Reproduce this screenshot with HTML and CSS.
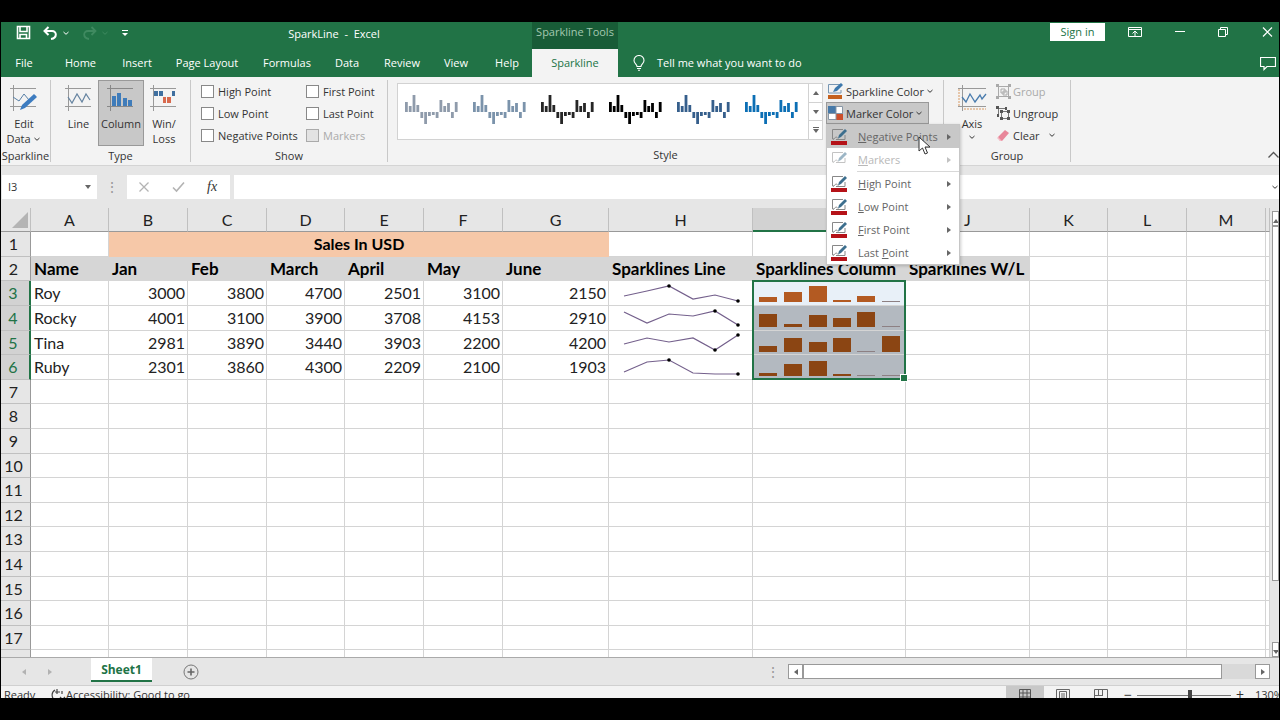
FILE: index.html
```html
<!DOCTYPE html>
<html lang="en">
<head>
  <meta charset="UTF-8">
  <meta name="viewport" content="width=device-width, initial-scale=1.0">
  <title>SparkLine - Excel</title>
  <link rel="stylesheet" href="styles.css">
</head>
<body>
  <svg class="defs" aria-hidden="true">
    <symbol id="caret" viewBox="0 0 8 8"><path d="M1.5 3L4 5.3 6.5 3" fill="none" stroke="currentColor" stroke-width="1"/></symbol>
    <symbol id="bars" viewBox="0 0 54 32">
      <path fill="currentColor" d="M0 8h2.8v10H0zM3.8 12h2.8v6H3.8zM7.6 1h2.8v17H7.6zM11.4 11h2.8v7h-2.8zM15.4 18h2.8v6h-2.8zM19.2 18H22v12h-2.8zM23 18h2.8v4H23zM26.9 18h2.8v3h-2.8zM30.7 18h2.8v6h-2.8zM34.5 6h2.8v12h-2.8zM38.3 12h2.8v6h-2.8zM42.1 9h2.8v9h-2.8zM46 18h2.8v6H46zM49.8 8h2.8v10h-2.8z"/>
    </symbol>
    <symbol id="pen" viewBox="0 0 16 17">
      <path d="M12 1.5H1.5V11H3M5 11.5h9V7" fill="none" stroke="#888"/>
      <path d="M7 10.5l1-3.5 6-6 2 2-6 6z" fill="#3d6f8e"/>
      <path d="M2.5 11.5C5 8 6 9 7 10.5" fill="none" stroke="#888"/>
    </symbol>
  </svg>

  <div class="window">
    <header class="title-bar">
      <div class="quick-access">
        <button aria-label="Save"><svg width="15" height="15" viewBox="0 0 15 15"><path d="M1.5 1.5h12v12h-12zM4 1.5v5h7v-5M4 13.5v-4h6.5v4" fill="none" stroke="#fff" stroke-width="1.6"/></svg></button>
        <button class="undo" aria-label="Undo"><svg width="15" height="14" viewBox="0 0 15 14"><path d="M5.5 1L1.5 5l4 4M2 5h7c5 0 5.500 7-1 8" fill="none" stroke="#fff" stroke-width="2"/></svg><svg width="8" height="8"><use href="#caret"/></svg></button>
        <button class="redo" aria-label="Redo" disabled><svg width="15" height="14" viewBox="0 0 15 14"><path d="M9.5 1l4 4-4 4M13 5H6c-5 0-5.500 7 1 8" fill="none" stroke="currentColor" stroke-width="1.8"/></svg><svg width="8" height="8"><use href="#caret"/></svg></button>
        <button aria-label="Customize toolbar"><svg width="8" height="8" viewBox="0 0 8 8"><path d="M1 1.5h6" stroke="#fff"/><path d="M1 4h6L4 7z" fill="#fff"/></svg></button>
      </div>
      <div class="doc-title">SparkLine &nbsp;-&nbsp; Excel</div>
      <div class="context-title">Sparkline Tools</div>
      <div class="window-controls">
        <button class="sign-in">Sign in</button>
        <button aria-label="Ribbon options"><svg width="14" height="12" viewBox="0 0 14 12"><path d="M.5 1.5h13v9H.5zM.5 3.5h13M7 10V5M4.5 7.5L7 5l2.5 2.5" fill="none" stroke="#fff"/></svg></button>
        <button aria-label="Minimize"><svg width="10" height="12" viewBox="0 0 10 12"><path d="M0 5.5h10" stroke="#fff"/></svg></button>
        <button aria-label="Restore"><svg width="11" height="12" viewBox="0 0 11 12"><path d="M.5 3.5h7v7h-7zM2.5 3V1.5h7v7H8" fill="none" stroke="#fff"/></svg></button>
        <button aria-label="Close"><svg width="11" height="12" viewBox="0 0 11 12"><path d="M1 1.5l9 9M10 1.5l-9 9" stroke="#fff" stroke-width="1.2"/></svg></button>
      </div>
    </header>

    <nav class="tabs">
      <a href="#">File</a>
      <a href="#">Home</a>
      <a href="#">Insert</a>
      <a href="#">Page Layout</a>
      <a href="#">Formulas</a>
      <a href="#">Data</a>
      <a href="#">Review</a>
      <a href="#">View</a>
      <a href="#">Help</a>
      <a href="#" class="active">Sparkline</a>
      <button class="tell-me"><svg width="12" height="16" viewBox="0 0 12 16"><path d="M4 11.5c0-2.5-3-3-3-6a5 5 0 0 1 10 0c0 3-3 3.5-3 6zM4 13.5h4M5 15.3h2" fill="none" stroke="#fff" stroke-width="1.1"/></svg>Tell me what you want to do</button>
      <button class="comments" aria-label="Comments"><svg width="16" height="15" viewBox="0 0 16 15"><path d="M.5 1.5h15v9H7l-3 3v-3H.5z" fill="none" stroke="#fff" stroke-width="1.2"/></svg></button>
    </nav>

    <div class="ribbon">
      <section class="group group-sparkline">
        <div class="group-body">
          <button class="big"><svg width="30" height="26" viewBox="0 0 30 26"><path d="M4.5 0v26M1 3.5h26M1 21.5h26" stroke="#999" fill="none"/><path d="M4 12l6 4 5-7 5 6 7-4" fill="none" stroke="#5980a6"/><path d="M11 25l2-5L25 9l3 3-12 11z" fill="#3d7cc0"/></svg><span>Edit</span><span>Data <svg width="8" height="8"><use href="#caret"/></svg></span></button>
        </div>
        <h2>Sparkline</h2>
      </section>

      <section class="group group-type">
        <div class="group-body">
          <button class="big"><svg width="30" height="26" viewBox="0 0 30 26"><path d="M4.5 0v26M1 3.5h26M1 21.5h26" stroke="#999" fill="none"/><path d="M4 12l4 6 5-9 5 8 4-8 4 6" fill="none" stroke="#6583a0" stroke-width="1.2"/></svg><span>Line</span></button>
          <button class="big pressed"><svg width="30" height="26" viewBox="0 0 30 26"><path d="M4.5 0v26M1 3.5h26M1 21.5h26" stroke="#888" fill="none"/><path d="M6 11h4v10H6zM11 8h4v13h-4zM17 13h4v8h-4zM22 15h4v6h-4z" fill="#3f7cba"/></svg><span>Column</span></button>
          <button class="big"><svg width="30" height="26" viewBox="0 0 30 26"><path d="M4.5 0v26M1 3.5h26M1 21.5h26" stroke="#999" fill="none"/><path d="M5 6h4v5H5zM10 6h4v5h-4zM23 6h3v5h-3z" fill="#3f6f9f"/><path d="M14 12h3v6h-3zM18 12h4v6h-4z" fill="#d8694d"/></svg><span>Win/</span><span>Loss</span></button>
        </div>
        <h2>Type</h2>
      </section>

      <section class="group group-show">
        <div class="group-body checks">
          <label><input type="checkbox">High Point</label>
          <label><input type="checkbox">First Point</label>
          <label><input type="checkbox">Low Point</label>
          <label><input type="checkbox">Last Point</label>
          <label><input type="checkbox">Negative Points</label>
          <label class="off"><input type="checkbox" disabled>Markers</label>
        </div>
        <h2>Show</h2>
      </section>

      <section class="group group-style">
        <div class="group-body">
          <div class="gallery">
            <button class="thumb slate" aria-label="Style 1"><svg><use href="#bars"/></svg></button>
            <button class="thumb steel" aria-label="Style 2"><svg><use href="#bars"/></svg></button>
            <button class="thumb dark" aria-label="Style 3"><svg><use href="#bars"/></svg></button>
            <button class="thumb black" aria-label="Style 4"><svg><use href="#bars"/></svg></button>
            <button class="thumb navy" aria-label="Style 5"><svg><use href="#bars"/></svg></button>
            <button class="thumb blue" aria-label="Style 6"><svg><use href="#bars"/></svg></button>
            <div class="gallery-scroll">
              <button aria-label="Up"><i class="tri up"></i></button>
              <button aria-label="Down"><i class="tri down"></i></button>
              <button class="more" aria-label="More"><i class="tri down"></i></button>
            </div>
          </div>
          <div class="color-buttons">
            <button class="small"><svg width="17" height="16" viewBox="0 0 17 16"><path d="M14 1.5H1.5V10H14V7" fill="none" stroke="#7796b3"/><path d="M6 9l2-4 6-5 2 2-6 6z" fill="#3d78ac"/><path d="M1 12h14v4H1z" fill="#c5611f"/></svg>Sparkline Color <svg width="8" height="8"><use href="#caret"/></svg></button>
            <button class="small open" aria-haspopup="menu"><svg width="17" height="16" viewBox="0 0 17 16"><path d="M1.5 1.5h14v13h-14z" fill="#fff" stroke="#8796a5"/><path d="M1 1h8v7H1z" fill="#4679a8"/><path d="M9 9h7v6H9z" fill="#cc4f2b"/><path d="M9 1v14M1 8.5h15" stroke="#8796a5"/></svg>Marker Color <svg width="8" height="8"><use href="#caret"/></svg></button>
            <div class="menu" role="menu">
              <button class="menu-item hover" role="menuitem"><svg class="pen"><use href="#pen"/></svg><span><u>N</u>egative Points</span><i class="tri right"></i></button>
              <button class="menu-item off" role="menuitem" disabled><svg class="pen"><use href="#pen"/></svg><span><u>M</u>arkers</span><i class="tri right"></i></button>
              <hr>
              <button class="menu-item" role="menuitem"><svg class="pen"><use href="#pen"/></svg><span><u>H</u>igh Point</span><i class="tri right"></i></button>
              <button class="menu-item" role="menuitem"><svg class="pen"><use href="#pen"/></svg><span><u>L</u>ow Point</span><i class="tri right"></i></button>
              <button class="menu-item" role="menuitem"><svg class="pen"><use href="#pen"/></svg><span><u>F</u>irst Point</span><i class="tri right"></i></button>
              <button class="menu-item" role="menuitem"><svg class="pen"><use href="#pen"/></svg><span>Last <u>P</u>oint</span><i class="tri right"></i></button>
              <svg class="cursor" width="13" height="20" viewBox="0 0 13 20"><path d="M1 1v14l3.5-3 2.5 6 2.5-1-2.5-6H12z" fill="#fff" stroke="#333"/></svg>
            </div>
          </div>
        </div>
        <h2>Style</h2>
      </section>

      <section class="group group-group">
        <div class="group-body">
          <button class="big"><svg width="30" height="26" viewBox="0 0 30 26"><path d="M5.5 0v26M1 3.5h28M1 21.5h28" stroke="#999" fill="none"/><path d="M1 5h3M1 8h3M1 11h3M1 14h3M1 17h3M1 20h3M7 24h22" stroke="#d99a62" stroke-dasharray="2 1"/><path d="M5 12l4 5 4-8 5 8 5-7 2 4 4-5" fill="none" stroke="#4a7cae" stroke-width="1.3"/></svg><span>Axis</span><svg width="8" height="12"><use href="#caret"/></svg></button>
          <div class="stack">
            <button class="small off"><svg width="15" height="15" viewBox="0 0 15 15"><path d="M2.5 2.5h10v10h-10zM5 5h4v4H5zM7 7h4v4H7z" fill="none" stroke="currentColor"/><path d="M0 0h3v3H0zM12 0h3v3h-3zM0 12h3v3H0zM12 12h3v3h-3z" fill="currentColor"/></svg>Group</button>
            <button class="small"><svg width="15" height="15" viewBox="0 0 15 15"><path d="M1 2.5h10M2.5 1v9M5.5 5.5h7v7h-7z" fill="none" stroke="#777"/><path d="M0 0h3v3H0zM9 1h2v3H9zM1 8h2v3H1zM4 4h3v3H4zM11 4h3v3h-3zM4 11h3v3H4zM11 11h3v3h-3z" fill="#555"/></svg>Ungroup</button>
            <button class="small clear"><svg width="15" height="15" viewBox="0 0 15 15"><path d="M2 9l7-7 4 3-7 8H4z" fill="#e8879a"/><path d="M2 9l4 4H4l-3-3z" fill="#f6bcc6"/></svg>Clear <svg width="8" height="8"><use href="#caret"/></svg></button>
          </div>
        </div>
        <h2>Group</h2>
      </section>
      <button class="collapse" aria-label="Collapse ribbon"><svg width="11" height="8" viewBox="0 0 11 8"><path d="M.5 6.5l5-5 5 5" fill="none" stroke="#555" stroke-width="1.3"/></svg></button>
    </div>

    <div class="formula-bar">
      <div class="name-box"><input type="text" value="I3" aria-label="Name box"><i class="tri down"></i></div>
      <span class="dots">⋮</span>
      <div class="formula-tools">
        <svg width="12" height="12" viewBox="0 0 12 12"><path d="M1.5 1.5l9 9M10.5 1.5l-9 9" stroke="#b3b3b3" stroke-width="1.3"/></svg>
        <svg width="13" height="12" viewBox="0 0 13 12"><path d="M1 6.5L4.500 10 12 1.5" fill="none" stroke="#b3b3b3" stroke-width="1.6"/></svg>
        <em>fx</em>
      </div>
      <input class="formula" type="text" aria-label="Formula">
      <svg class="expand" width="8" height="8"><use href="#caret" y="8" height="8"/></svg>
    </div>

    <main class="sheet">
      <table>
        <colgroup>
          <col class="w-row"><col class="w-78"><col class="w-79"><col class="w-79"><col class="w-78"><col class="w-79"><col class="w-79"><col class="w-g"><col class="w-h"><col class="w-i"><col class="w-j"><col class="w-78"><col class="w-79"><col class="w-79"><col>
        </colgroup>
        <thead>
          <tr><th class="corner"><svg width="16" height="16" viewBox="0 0 16 16"><path d="M16 0v16H0z" fill="#b4b4b4"/></svg></th><th>A</th><th>B</th><th>C</th><th>D</th><th>E</th><th>F</th><th>G</th><th>H</th><th class="selected">I</th><th>J</th><th>K</th><th>L</th><th>M</th><th></th></tr>
        </thead>
        <tbody id="rows"></tbody>
      </table>
      <div class="v-scroll">
        <button aria-label="Scroll up"><i class="tri up"></i></button>
        <div class="v-thumb"></div>
        <button aria-label="Scroll down"><i class="tri down"></i></button>
      </div>
    </main>

    <div class="sheet-tabs">
      <div class="sheet-nav"><i class="tri left"></i><i class="tri right"></i></div>
      <a href="#" class="sheet-tab">Sheet1</a>
      <button class="add-sheet" aria-label="New sheet"><svg width="16" height="16" viewBox="0 0 16 16"><circle cx="8" cy="8" r="7" fill="none" stroke="#777"/><path d="M8 4.5v7M4.5 8h7" stroke="#666" stroke-width="1.6"/></svg></button>
      <span class="dots">⋮</span>
      <div class="h-scroll">
        <button aria-label="Scroll left"><i class="tri left"></i></button>
        <div class="h-thumb"></div>
        <button class="last" aria-label="Scroll right"><i class="tri right"></i></button>
      </div>
    </div>

    <footer class="status-bar">
      <span class="ready">Ready</span>
      <svg width="16" height="16" viewBox="0 0 16 16"><path d="M5 2a6 6 0 0 0 2 11M7 1v5M5 4h5M12 3v3M10 9l5 5M15 9l-5 5" fill="none" stroke="#444" stroke-width="1.2"/></svg>
      <span>Accessibility: Good to go</span>
      <div class="views">
        <button class="on" aria-label="Normal"><svg width="14" height="14" viewBox="0 0 14 14"><path d="M1.5 1.5h11v11h-11zM5 1v12M9 1v12M1 5h12M1 9h12" fill="none" stroke="#555"/></svg></button>
        <button aria-label="Page layout"><svg width="14" height="14" viewBox="0 0 14 14"><path d="M.5 1.5h13v12H.5zM3.5 3.5h7v10h-7zM5 6h4M5 8h4M5 10h4" fill="none" stroke="#666"/></svg></button>
        <button aria-label="Page break"><svg width="14" height="14" viewBox="0 0 14 14"><path d="M.5 13V1.5h13V13M4.5 1v6M8.5 1v6M1 7.5h8" fill="none" stroke="#666"/></svg></button>
      </div>
      <div class="zoom"><span>−</span><input type="range" min="0" max="100" value="57" aria-label="Zoom"><span>+</span></div>
      <span class="percent">130%</span>
    </footer>
  </div>

  <script>
    const people = [
      { name: "Roy", sales: [3000, 3800, 4700, 2501, 3100, 2150], line: [15, 10, 5, 18, 14, 20], dots: [2, 5], bars: [5, 10, 16, 2, 6, 0] },
      { name: "Rocky", sales: [4001, 3100, 3900, 3708, 4153, 2910], line: [6, 17, 8, 10, 5, 19], dots: [4, 5], bars: [13, 3, 12, 9, 15, 0] },
      { name: "Tina", sales: [2981, 3890, 3440, 3903, 2200, 4200], line: [13, 7, 11, 7, 19, 4], dots: [4, 5], bars: [6, 14, 10, 14, 0, 16] },
      { name: "Ruby", sales: [2301, 3860, 4300, 2209, 2100, 1903], line: [17, 7, 5, 18, 19, 19], dots: [2, 5], bars: [3, 12, 15, 2, 0, 0] }
    ];
    const lineX = [15, 38, 60, 84, 106, 129];
    const barX = [6, 31, 56, 80, 104, 129];

    function lineChart(p) {
      const points = p.line.map((y, i) => `${lineX[i]},${y}`).join(" ");
      const dots = p.dots.map(i => `<circle cx="${lineX[i]}" cy="${p.line[i]}" r="1.8"/>`).join("");
      return `<svg class="spark" width="143" height="22"><polyline points="${points}" fill="none" stroke="#74608c" stroke-width="1.2"/>${dots}</svg>`;
    }

    function barChart(p) {
      const bars = p.bars.map((h, i) => h
        ? `<rect x="${barX[i]}" y="${21 - h}" width="18" height="${h}"/>`
        : `<rect class="low" x="${barX[i]}" y="20" width="18" height="1"/>`).join("");
      return `<svg class="spark columns" width="152" height="22">${bars}</svg>`;
    }

    const blank = n => "<td></td>".repeat(n);
    let html = `<tr><th>1</th><td></td><td class="banner" colspan="6">Sales In USD</td>${blank(7)}</tr>`;

    const titles = ["Name", "Jan", "Feb", "March", "April", "May", "June", "Sparklines Line", "Sparklines Column", "Sparklines W/L"];
    html += `<tr class="titles"><th>2</th>${titles.map(t => `<td>${t}</td>`).join("")}${blank(4).replaceAll("<td>", '<td class="plain">')}</tr>`;

    people.forEach((p, i) => {
      const frame = i === 0 ? '<div class="selection"></div>' : "";
      html += `<tr><th class="selected">${i + 3}</th><td>${p.name}</td>`;
      html += p.sales.map(s => `<td class="num">${s}</td>`).join("");
      html += `<td>${lineChart(p)}</td><td class="picked${i === 0 ? " active-cell" : ""}">${barChart(p)}${frame}</td>${blank(5)}</tr>`;
    });

    for (let r = 7; r <= 18; r++) {
      html += `<tr><th>${r}</th>${blank(14)}</tr>`;
    }
    document.getElementById("rows").innerHTML = html;
  </script>
</body>
</html>
```
FILE: styles.css
```css
* {
  box-sizing: border-box;
}
body {
  margin: 0;
  background: #000;
  font-family: "Open Sans", "Noto Sans", sans-serif;
  font-size: 11px;
  color: #333;
}
button, input {
  font: inherit;
  color: inherit;
  border: none;
  background: none;
  padding: 0;
  margin: 0;
}
a {
  color: inherit;
  text-decoration: none;
}
.defs {
  position: absolute;
  width: 0;
  height: 0;
}
.window {
  display: flex;
  flex-direction: column;
  height: calc(100vh - 44px);
  margin: 22px 1px;
  background: #e6e6e6;
  overflow: hidden;
}

/* little arrows */
.tri {
  display: inline-block;
  flex: none;
  border: 3px solid transparent;
  width: 0;
  height: 0;
}
.tri.up { border-bottom: 4px solid #666; border-top: 0; }
.tri.down { border-top: 4px solid #666; border-bottom: 0; }
.tri.left { border-right: 4px solid #666; border-left: 0; }
.tri.right { border-left: 4px solid #666; border-right: 0; }

/* title bar */
.title-bar {
  display: flex;
  flex: none;
  height: 27px;
  background: #217346;
  color: #fff;
}
.quick-access {
  display: flex;
  align-items: center;
  gap: 12px;
  width: 210px;
  padding: 0 0 6px 15px;
}
.quick-access button {
  display: flex;
  align-items: center;
  gap: 4px;
}
.quick-access .redo {
  color: #3f8a60;
}
.doc-title {
  width: 246px;
  padding-top: 4px;
  text-align: center;
}
.context-title {
  width: 86px;
  margin-left: 75px;
  padding-top: 2px;
  background: #185c37;
  color: #a3c9b0;
  text-align: center;
}
.window-controls {
  display: flex;
  align-items: center;
  gap: 33px;
  margin-left: auto;
  padding: 0 6px 8px 0;
}
.window-controls button {
  display: flex;
}
.window-controls .sign-in {
  display: block;
  width: 55px;
  height: 18px;
  margin-right: -10px;
  background: #fff;
  color: #217346;
}

/* ribbon tabs */
.tabs {
  display: grid;
  grid-template-columns: 46px 67px 46px 94px 66px 54px 56px 52px 50px 86px auto 1fr;
  flex: none;
  height: 28px;
  background: #217346;
  color: #fff;
  line-height: 28px;
  text-align: center;
}
.tabs .active {
  background: #f3f3f3;
  color: #217346;
}
.tell-me {
  display: flex;
  align-items: center;
  gap: 12px;
  padding-left: 15px;
}
.comments {
  display: flex;
  align-items: center;
  justify-self: end;
  padding-right: 3px;
}

/* ribbon */
.ribbon {
  display: flex;
  flex: none;
  position: relative;
  z-index: 2;
  height: 88px;
  padding: 3px 0;
  background: #f3f3f3;
  line-height: 15px;
}
.group {
  display: flex;
  flex-direction: column;
  border-right: 1px solid #c8c8c8;
}
.group h2 {
  margin: 0;
  font-size: 11px;
  font-weight: normal;
  line-height: 15px;
  text-align: center;
}
.group-body {
  display: flex;
  height: 69px;
  margin-bottom: 1px;
}
.group h2 {
  padding-top: 1px;
}
.group-sparkline { width: 50px; }
.group-type { width: 140px; }
.group-show { width: 197px; }
.group-style { width: 556px; }
.group-group { width: 127px; }
.big {
  display: flex;
  flex: none;
  flex-direction: column;
  align-items: center;
  width: 46px;
  height: 66px;
  padding-top: 5px;
  white-space: nowrap;
  line-height: 15px;
}
.big > svg:first-child {
  flex: none;
  margin-bottom: 5px;
}
.big.pressed {
  background: #c8c8c8;
  border: 1px solid #999;
  padding-top: 4px;
}
.group-type .big:first-child {
  width: 47px;
  padding-left: 8px;
}
.group-type .big:last-child {
  width: 40px;
}
.checks {
  display: grid;
  grid-template-columns: 105px 80px;
  align-content: start;
  padding-left: 10px;
}
.checks label {
  display: flex;
  align-items: center;
  gap: 4px;
  height: 22px;
  white-space: nowrap;
}
.checks input {
  appearance: none;
  flex: none;
  width: 13px;
  height: 13px;
  border: 1px solid #888;
  background: #fff;
}
.checks .off {
  color: #aaa;
}
.checks .off input {
  background: #e3e3e3;
  border-color: #aaa;
}
.gallery {
  display: flex;
  width: 426px;
  height: 57px;
  margin: 3px 3px 0 9px;
  background: #fff;
  border: 1px solid #d2d2d2;
}
.thumb {
  width: 68px;
  padding: 0 7px 4px;
}
.thumb svg {
  display: block;
  width: 54px;
  height: 32px;
}
.slate { color: #8f9bab; }
.steel { color: #7b93ab; }
.dark { color: #262626; }
.black { color: #000; }
.navy { color: #365f8c; }
.blue { color: #0c6fb5; }
.gallery-scroll {
  display: flex;
  flex-direction: column;
  width: 14px;
  margin-left: auto;
  border-left: 1px solid #d2d2d2;
}
.gallery-scroll button {
  display: flex;
  flex: 1;
  flex-direction: column;
  gap: 1px;
  align-items: center;
  justify-content: center;
}
.gallery-scroll button + button {
  border-top: 1px solid #d2d2d2;
}
.gallery-scroll .more::before {
  content: "";
  width: 6px;
  border-top: 1px solid #666;
}
.small {
  display: flex;
  align-items: center;
  gap: 2px;
  height: 22px;
  padding: 0 1px;
  white-space: nowrap;
}
.small.off {
  color: #aaa;
}
.color-buttons {
  position: relative;
}
.small.open {
  width: 103px;
  background: #c8c8c8;
  border: 1px solid #999;
  padding: 0;
}
.stack {
  padding-left: 3px;
}
.group-group .big {
  width: 48px;
  padding-left: 8px;
}
.clear svg:last-child {
  margin-left: 6px;
}
.collapse {
  margin-left: auto;
  align-self: flex-end;
}

/* marker color menu */
.menu {
  position: absolute;
  top: 44px;
  left: 0;
  width: 134px;
  background: #fff;
  border: 1px solid #c6c6c6;
  box-shadow: 1px 1px 3px rgba(0, 0, 0, 0.2);
}
.menu-item {
  display: flex;
  align-items: center;
  width: 100%;
  height: 23px;
  padding: 0 8px 0 4px;
  color: #666;
}
.menu-item .pen {
  width: 16px;
  height: 17px;
  margin-right: 11px;
  background: linear-gradient(#b51218, #b51218) bottom / 100% 4px no-repeat;
}
.menu-item .tri {
  margin-left: auto;
}
.menu-item.hover {
  background: #c8c8c8;
}
.menu-item.off {
  color: #b8b8b8;
}
.menu-item.off .pen {
  background: none;
  opacity: 0.5;
}
.menu-item.off .tri {
  opacity: 0.4;
}
.menu hr {
  margin: 0 0 0 30px;
  border: none;
  border-top: 1px solid #d8d8d8;
}
.cursor {
  position: absolute;
  left: 91px;
  top: 11px;
}

/* formula bar */
.formula-bar {
  display: flex;
  flex: none;
  align-items: center;
  height: 43px;
  padding: 0 0 1px 1px;
  border-top: 1px solid #d4d4d4;
}
.name-box {
  display: flex;
  align-items: center;
  width: 95px;
  height: 24px;
  padding: 0 6px;
  background: #fff;
}
.name-box input {
  width: 77px;
}
.dots {
  width: 30px;
  color: #999;
  font-size: 14px;
  text-align: center;
}
.formula-tools {
  display: flex;
  align-items: center;
  gap: 22px;
  width: 103px;
  height: 24px;
  padding-left: 11px;
  background: #fff;
}
.formula-tools em {
  font-family: "Liberation Serif", serif;
  font-size: 14px;
}
.formula {
  flex: 1;
  height: 24px;
  margin-left: 4px;
  background: #fff;
}
.expand {
  background: #fff;
  height: 24px;
}

/* grid */
.sheet {
  display: flex;
  flex: 1;
  min-height: 0;
  overflow: hidden;
  border-bottom: 1px solid #aaa;
}
table {
  flex: 1;
  align-self: flex-start;
  width: 100%;
  table-layout: fixed;
  border-collapse: separate;
  border-spacing: 0;
  background: #fff;
  font-family: Lato, "Open Sans", sans-serif;
  font-size: 16px;
  line-height: 20px;
  color: #222;
}
.w-row { width: 30px; }
.w-78 { width: 78px; }
.w-79 { width: 79px; }
.w-g { width: 106px; }
.w-h { width: 144px; }
.w-i { width: 153px; }
.w-j { width: 124px; }
th, td {
  height: 25px;
  padding: 0 2px 0 3px;
  border-right: 1px solid #d4d4d4;
  border-bottom: 1px solid #d4d4d4;
  text-align: left;
  white-space: nowrap;
}
thead th {
  height: 24px;
}
tbody tr:nth-child(5n) > *,
tbody tr:nth-child(5n + 2) > * {
  height: 24px;
}
th {
  padding: 0;
  background: #e6e6e6;
  border-color: #c0c0c0;
  font-weight: normal;
  text-align: center;
}
thead th {
  border-bottom-color: #999;
}
tbody th {
  padding-right: 4px;
  border-right-color: #999;
}
th.selected {
  background: #d2d2d2;
  color: #217346;
}
thead th.selected {
  border-bottom: 2px solid #217346;
}
tbody th.selected {
  border-right: 2px solid #217346;
}
th.corner {
  padding-right: 2px;
  text-align: right;
  vertical-align: bottom;
}
.corner svg {
  display: block;
  margin: 0 0 3px auto;
}
.num {
  text-align: right;
}
.banner {
  background: #f6c8a8;
  border-color: #f6c8a8;
  color: #000;
  font-weight: bold;
  text-align: center;
}
.titles td:not(.plain) {
  background: #d6d6d6;
  border-color: #d6d6d6;
  color: #000;
  font-size: 17px;
  font-weight: bold;
}
td:has(.spark) {
  padding: 0;
  vertical-align: top;
}
.spark {
  display: block;
}
.columns {
  fill: #8b4513;
}
.active-cell .columns {
  fill: #b35a22;
}
.columns .low {
  fill: #8d8083;
}
.picked {
  position: relative;
  background: #b3b9c0;
}
.active-cell {
  background: #e8f0f8;
}
.selection {
  position: absolute;
  z-index: 1;
  top: -1px;
  left: -1px;
  width: calc(100% + 2px);
  height: 100px;
  border: 2px solid #217346;
}
.selection::after {
  content: "";
  position: absolute;
  right: -4px;
  bottom: -4px;
  width: 6px;
  height: 6px;
  background: #217346;
  border: 1px solid #fff;
}
.v-scroll {
  display: flex;
  flex-direction: column;
  flex: none;
  width: 9px;
  padding-top: 3px;
  padding-left: 2px;
}
.v-scroll button {
  height: 15px;
  overflow: hidden;
  background: #fff;
  border: 1px solid #999;
  line-height: 8px;
}
.v-thumb {
  height: 355px;
  margin-bottom: auto;
  background: #fff;
  border: 1px solid #999;
}

/* sheet tabs */
.sheet-tabs {
  display: flex;
  flex: none;
  align-items: center;
  height: 27px;
}
.sheet-nav {
  display: flex;
  gap: 22px;
  width: 90px;
  padding-left: 21px;
  opacity: 0.4;
}
.sheet-tab {
  align-self: flex-start;
  width: 61px;
  height: 24px;
  background: #fff;
  border-bottom: 2px solid #217346;
  color: #217346;
  font-size: 12px;
  font-weight: bold;
  line-height: 24px;
  text-align: center;
}
.add-sheet {
  display: flex;
  margin-left: 31px;
}
.sheet-tabs .dots {
  margin-left: auto;
}
.h-scroll {
  display: flex;
  width: 482px;
  height: 15px;
  margin-right: 9px;
  background: #d9d9d9;
}
.h-scroll button {
  display: flex;
  align-items: center;
  justify-content: center;
  flex: none;
  width: 15px;
  background: #fff;
  border: 1px solid #999;
}
.h-thumb {
  width: 87%;
  background: #fff;
  border: 1px solid #999;
}
.h-scroll .last {
  margin-left: auto;
}

/* status bar, cut off by the window's lower edge */
.status-bar {
  display: flex;
  flex: none;
  align-items: flex-start;
  height: 13px;
  overflow: hidden;
  background: #f3f3f3;
  border-top: 1px solid #d0d0d0;
  line-height: 18px;
  white-space: nowrap;
}
.ready {
  width: 49px;
  padding-left: 3px;
}
.status-bar > svg {
  margin-top: 2px;
}
.views {
  display: flex;
  margin-left: auto;
}
.views button {
  width: 38px;
  padding-top: 2px;
}
.views .on {
  background: #c8c8c8;
}
.zoom {
  display: flex;
  gap: 5px;
  margin-left: 4px;
  font-size: 14px;
}
.zoom input {
  appearance: none;
  width: 94px;
  height: 18px;
  background: linear-gradient(#777, #777) center / 100% 1px no-repeat;
}
.zoom input::-webkit-slider-thumb {
  appearance: none;
  width: 4px;
  height: 11px;
  background: #444;
}
.percent {
  width: 24px;
  margin-left: 11px;
}
```
